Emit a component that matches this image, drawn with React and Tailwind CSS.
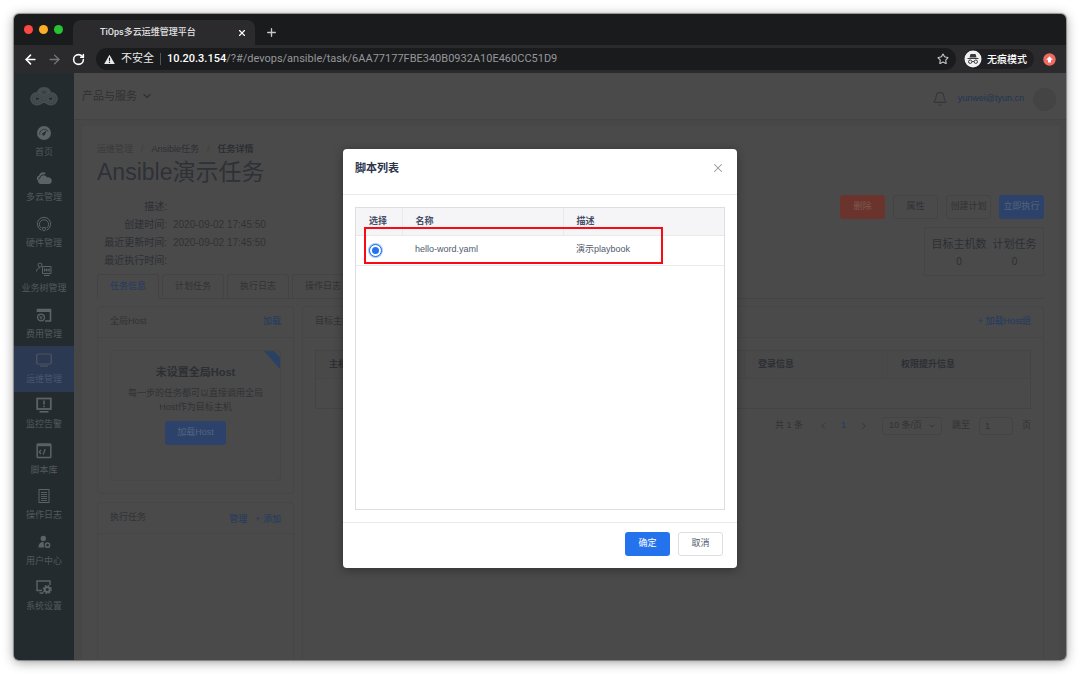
import { useState } from 'react';
import { ArrowLeft, ArrowRight, RotateCw, Star, X, Plus, ChevronDown, ChevronLeft, ChevronRight, Bell } from 'lucide-react';

const menu = [
    { label: '首页', icon: 'home' },
    { label: '多云管理', icon: 'cloud' },
    { label: '硬件管理', icon: 'hardware' },
    { label: '业务树管理', icon: 'tree' },
    { label: '费用管理', icon: 'cost' },
    { label: '运维管理', icon: 'monitor', active: true },
    { label: '监控告警', icon: 'alarm' },
    { label: '脚本库', icon: 'script' },
    { label: '操作日志', icon: 'log' },
    { label: '用户中心', icon: 'user' },
    { label: '系统设置', icon: 'setting' },
];

const info = [
    { label: '描述', value: '' },
    { label: '创建时间', value: '2020-09-02 17:45:50' },
    { label: '最近更新时间', value: '2020-09-02 17:45:50' },
    { label: '最近执行时间', value: '' },
];

const tabs = ['任务信息', '计划任务', '执行日志', '操作日志'];

const shapes = {
    home: (
        <>
            <circle cx="8" cy="8" r="7" fill="currentColor" />
            <path d="M3.8 9.5a4.5 4.5 0 0 1 8.2-3.2" fill="none" stroke="#232b2e" strokeWidth="1" strokeDasharray="2 .6" />
            <path d="M10.8 5.3 9 9.2a1.4 1.4 0 1 1-1.6-1.5z" fill="#232b2e" />
        </>
    ),
    cloud: (
        <>
            <path d="M1.300 10.500C.3 8.500 1 6.200 3 5.800 3.600 2.800 7 1.300 9.800 3.200L8.800 4.200C6 4 4.500 5.300 3.800 7.200 2.500 7.800 2 9 2.200 10z" fill="currentColor" />
            <path d="M4.500 14a2.900 2.900 0 0 1-.3-5.700C4.700 4.800 9.300 3.900 11 7.400c2.700-.3 4.800 1.200 4.800 3.500 0 1.800-1.300 3.100-3.300 3.100z" fill="currentColor" />
        </>
    ),
    hardware: (
        <g fill="none" stroke="currentColor">
            <path d="M5.500 14.200a6.700 6.700 0 1 1 5 0" />
            <path d="M5.200 12a4.600 4.600 0 1 1 5.600 0" />
            <path d="M6.700 11.500h2.600v2a1.300 1.300 0 0 1-2.600 0z" />
        </g>
    ),
    tree: (
        <g fill="none" stroke="currentColor">
            <circle cx="4" cy="4" r="2" />
            <path d="M.5 10.500C.8 8 2 6.800 4 6.800M6.500 5.500H15v7H6.500zM8.500 7.500v3M10.700 7.500v3M13 7.500v3M8 9h6M8 14.500h5.500" />
        </g>
    ),
    cost: (
        <>
            <path d="M1.500 5V2.500h13V14H9" fill="none" stroke="currentColor" strokeWidth="1.600" />
            <path d="M1 2h14v3H1z" fill="currentColor" />
            <circle cx="5" cy="10.500" r="3.400" fill="none" stroke="currentColor" strokeWidth="1.300" />
            <path d="m3.500 8.800 1.500 1.700 1.500-1.700M5 10.500v2M3.800 11h2.400" fill="none" stroke="currentColor" strokeWidth=".9" />
        </>
    ),
    monitor: (
        <>
            <rect x=".8" y="2" width="14.400" height="10" rx="1.200" fill="none" stroke="currentColor" strokeWidth="1.200" />
            <path d="M4 14h8" stroke="currentColor" strokeWidth="1.200" />
        </>
    ),
    alarm: (
        <>
            <rect x="1.200" y="1.500" width="13.600" height="10.500" fill="none" stroke="currentColor" strokeWidth="1.800" />
            <path d="M3.500 14.800h9" stroke="currentColor" strokeWidth="1.600" />
            <path d="M8 3.500v4M8 8.800v1.500" stroke="currentColor" strokeWidth="1.600" />
        </>
    ),
    script: (
        <>
            <rect x="1.200" y="1" width="13.600" height="13.500" rx=".8" fill="none" stroke="currentColor" strokeWidth="1.500" />
            <path d="M1 2.200h14" stroke="currentColor" strokeWidth="2" />
            <path d="M5 7 3.200 9 5 11M9.200 6l-2 5.500" fill="none" stroke="currentColor" strokeWidth="1.200" />
        </>
    ),
    log: (
        <g fill="none" stroke="currentColor">
            <rect x="3" y="1.500" width="10" height="13" />
            <path d="M5 4.500h6M5 6.500h6M5 8.500h6M5 10.500h6M5 12.500h6" strokeWidth=".9" />
        </g>
    ),
    user: (
        <>
            <circle cx="7.300" cy="4.500" r="2.700" fill="currentColor" />
            <path d="M2.500 13.500c0-4 2-5.500 5-5.500L8 13.500z" fill="currentColor" />
            <circle cx="11.500" cy="11.200" r="2.100" fill="none" stroke="currentColor" strokeWidth="1.500" />
        </>
    ),
    setting: (
        <>
            <path d="M6 11.500H1V2h13v4M3.500 14h4" fill="none" stroke="currentColor" strokeWidth="1.400" />
            <circle cx="11.300" cy="10.500" r="2.500" fill="none" stroke="currentColor" strokeWidth="2" />
            <circle cx="11.300" cy="10.500" r="3.900" fill="none" stroke="currentColor" strokeWidth="1.500" strokeDasharray="1.600 1.460" />
        </>
    ),
};

const loop = 'M14 12.500C12 10.500 9.500 8.700 7 8.700a4 4 0 0 0 0 8c5 0 9-8 14-8a4 4 0 0 1 0 8c-2.500 0-5-2.200-7-4.200z';

const Logo = () => (
    <svg viewBox="0 0 28 20" className="h-5 w-7" fill="none">
        <path d="M9 5.500a6 6 0 0 1 10 0l-2 3-3 2-3-2z" fill="#394144" stroke="#464e51" strokeWidth="3.600" strokeLinejoin="round" />
        <path d={loop} stroke="#464e51" strokeWidth="5.600" />
        <path d={loop} stroke="#3a4245" strokeWidth="2.400" />
        <path d={loop} stroke="#464e51" strokeWidth="1.200" />
    </svg>
);

const BrowserBar = () => (
    <div className="font-[Roboto,'Noto_Sans_CJK_SC',sans-serif] text-white">
        <div className="flex h-[31px] items-end bg-[#1a1b1d] pl-[10px]">
            <div className="flex h-[31px] items-center gap-[6px]">
                <span className="h-[9px] w-[9px] rounded-full bg-[#fc4745]" />
                <span className="h-[9px] w-[9px] rounded-full bg-[#fdae25]" />
                <span className="h-[9px] w-[9px] rounded-full bg-[#29c331]" />
            </div>
            <div className="ml-[10px] flex h-[25px] w-[182px] items-center justify-between rounded-t-lg bg-[#2b2b2e] pr-2 pl-[27px]">
                <span className="text-[9px] font-medium text-[#e3e3e5]">TiOps多云运维管理平台</span>
                <button aria-label="关闭标签页"><X className="h-[10px] w-[10px]" strokeWidth={2.8} /></button>
            </div>
            <button aria-label="新标签页" className="flex h-[25px] items-center pl-[10px] text-[#c8c8ca]"><Plus className="h-[13px] w-[13px]" strokeWidth={2.5} /></button>
        </div>
        <div className="flex h-7 items-center bg-[#2b2b2e] pr-[10px] pl-[9px]">
            <button aria-label="后退"><ArrowLeft className="h-[15px] w-[15px]" strokeWidth={2.5} /></button>
            <button aria-label="前进" className="ml-[9px] text-[#77777a]"><ArrowRight className="h-[15px] w-[15px]" strokeWidth={2.2} /></button>
            <button aria-label="刷新" className="ml-[10px]"><RotateCw className="h-[13px] w-[13px]" strokeWidth={2.8} /></button>
            <div className="ml-[11px] flex h-[22px] min-w-0 flex-1 items-center rounded-full bg-[#1a1b1d] pr-[7px] pl-[8px] text-[11px]">
                <svg viewBox="0 0 12 12" className="h-[11px] w-[11px]">
                    <path d="M6 .8 11.800 11H.2z" fill="#e8e8ea" />
                    <path d="M6 4.200v3.300M6 8.500v1.300" stroke="#1a1b1d" strokeWidth="1.200" />
                </svg>
                <span className="ml-[6px] text-[#e8e8ea]">不安全</span>
                <span className="mx-[6px] h-3 w-px bg-[#55565a]" />
                <span className="font-medium text-white">10.20.3.154</span>
                <span className="flex-1 truncate text-[#96979b]">/?#/devops/ansible/task/6AA77177FBE340B0932A10E460CC51D9</span>
                <button aria-label="收藏"><Star className="h-3 w-3 text-[#c8c8ca]" strokeWidth={2.2} /></button>
            </div>
            <div className="ml-2 flex h-5 items-center rounded-full bg-[#1f1f21] pr-[7px]">
                <svg viewBox="0 0 18 18" className="h-[18px] w-[18px]">
                    <circle cx="9" cy="9" r="8.500" fill="#f1f1f2" />
                    <path d="M6.500 4h5l1 3.500h-7zM3.500 8h11v1h-11z" fill="#3a3a3c" />
                    <path d="M8 11.500h2" stroke="#3a3a3c" />
                    <circle cx="6.200" cy="11.700" r="1.700" fill="none" stroke="#3a3a3c" />
                    <circle cx="11.800" cy="11.700" r="1.700" fill="none" stroke="#3a3a3c" />
                </svg>
                <span className="ml-[5px] text-[10px] font-medium">无痕模式</span>
            </div>
            <button aria-label="更新" className="ml-[9px]">
                <svg viewBox="0 0 13 13" className="h-[13px] w-[13px]">
                    <circle cx="6.500" cy="6.500" r="6.200" fill="#ee6a63" />
                    <path d="M6.500 3.200 9.800 6.700H8v2.800H5V6.700H3.200z" fill="#fff" />
                </svg>
            </button>
        </div>
    </div>
);

const Sidebar = () => (
    <nav className="w-[60px] shrink-0 bg-[#232b2e] text-[9px] text-[#525a5d]">
        <div className="flex h-[46px] items-center justify-center"><Logo /></div>
        <div className="flex h-[500px] flex-col">
            {menu.map((m) => (
                <a key={m.icon} href="#" className={m.active ? 'flex flex-1 flex-col items-center justify-center gap-1 bg-[#2b3953] text-[#4a576e]' : 'flex flex-1 flex-col items-center justify-center gap-1'}>
                    <svg viewBox="0 0 16 16" className={m.active ? 'h-4 w-4 text-[#505461]' : 'h-4 w-4 text-[#5c6366]'}>{shapes[m.icon]}</svg>
                    <span className="leading-[14px] whitespace-nowrap">{m.label}</span>
                </a>
            ))}
        </div>
    </nav>
);

const HostPanel = () => (
    <section className="rounded-sm border border-[#464646]">
        <div className="flex h-[31px] items-center justify-between border-b border-[#464646] px-3">
            <h2>全局Host</h2>
            <a href="#" className="text-[#213a62]">加载</a>
        </div>
        <div className="p-3">
            <div className="relative flex h-[131px] flex-col items-center rounded-sm border border-[#464646] px-2 pt-[13px] text-center">
                <svg viewBox="0 0 16 18" className="absolute top-0 right-0 h-[18px] w-4"><path d="M0 0h10l6 6v12z" fill="#2a4262" /></svg>
                <h3 className="text-[11px] leading-4 font-bold text-[#2c2f34]">未设置全局Host</h3>
                <p className="mt-[6px] w-[140px] leading-[14px]">每一步的任务都可以直接调用全局Host作为目标主机</p>
                <button className="mt-[7px] h-6 rounded-[3px] bg-[#2d426a] px-3 text-[#54627c]">加载Host</button>
            </div>
        </div>
    </section>
);

const TargetPanel = () => (
    <section className="min-w-0 flex-1 rounded-t-sm border border-b-0 border-[#464646]">
        <div className="flex h-[31px] items-center justify-between border-b border-[#464646] px-3">
            <h2>目标主机</h2>
            <a href="#" className="text-[#213a62]">+ 加载Host组</a>
        </div>
        <div className="px-3 pt-3">
            <table className="w-full table-fixed border border-[#444] text-left">
                <thead>
                    <tr className="h-7 border-b border-[#464646] bg-[#494949] text-[#2c2f34]">
                        <th className="px-[13px] font-bold">主机</th>
                        <th></th>
                        <th></th>
                        <th className="border-l border-[#464646] px-[13px] font-bold">登录信息</th>
                        <th className="border-l border-[#464646] px-[13px] font-bold">权限提升信息</th>
                    </tr>
                </thead>
                <tbody>
                    <tr className="h-[30px]"><td colSpan={5}></td></tr>
                </tbody>
            </table>
            <div className="mt-2 flex h-[18px] items-center justify-end">
                <span>共 1 条</span>
                <button aria-label="上一页" className="ml-[15px]"><ChevronLeft className="h-[10px] w-[10px]" /></button>
                <button className="mx-[13px] text-[#213a62]">1</button>
                <button aria-label="下一页"><ChevronRight className="h-[10px] w-[10px]" /></button>
                <span className="relative ml-[13px] flex items-center">
                    <select aria-label="每页条数" className="h-[18px] w-[60px] appearance-none rounded-[3px] border border-[#444] pl-[6px]">
                        <option>10 条/页</option>
                    </select>
                    <ChevronDown className="pointer-events-none absolute right-[6px] h-2 w-2" strokeWidth={2.5} />
                </span>
                <label htmlFor="page" className="ml-[10px]">跳至</label>
                <input id="page" defaultValue="1" className="mx-[9px] h-[18px] w-[34px] rounded-[3px] border border-[#444] px-[5px]" />
                <span>页</span>
            </div>
        </div>
    </section>
);

const ScriptModal = () => {
    const [selected, setSelected] = useState('hello-word.yaml');

    return (
        <div role="dialog" aria-labelledby="modal-title" className="w-[394px] rounded bg-white text-[9px] text-[#515a6e] shadow-[0_2px_10px_rgba(0,0,0,0.35)]">
            <div className="flex h-[46px] items-start justify-between border-b border-[#e8eaec] px-3 pt-[11px]">
                <h2 id="modal-title" className="text-[11px] leading-4 font-bold text-[#2b344b]">脚本列表</h2>
                <button aria-label="关闭" className="text-[#999]"><X className="h-4 w-[14px]" strokeWidth={1.8} /></button>
            </div>
            <div className="p-3">
                <div className="relative h-[303px] border border-[#dcdee2]">
                    <table className="w-full table-fixed text-left">
                        <thead>
                            <tr className="h-[27px] border-b border-[#e8eaec] bg-[#f5f5f8] text-[#464f66]">
                                <th className="w-[46px] border-r border-[#e8eaec] pl-[13px] font-bold">选择</th>
                                <th className="border-r border-[#e8eaec] px-[13px] font-bold">名称</th>
                                <th className="px-[13px] font-bold">描述</th>
                            </tr>
                        </thead>
                        <tbody>
                            <tr className="h-[30px] border-b border-[#e8eaec]">
                                <td className="pl-[14px]">
                                    <input
                                        type="radio"
                                        id="script"
                                        name="script"
                                        checked={selected === 'hello-word.yaml'}
                                        onChange={() => setSelected('hello-word.yaml')}
                                        className="block h-[11px] w-[11px] appearance-none rounded-full border-2 border-white bg-[#2573ec] shadow-[0_0_0_2px_#a9c9f8] outline outline-[#2573ec]"
                                    />
                                </td>
                                <td className="px-[13px]"><label htmlFor="script">hello-word.yaml</label></td>
                                <td className="px-[13px]">演示playbook</td>
                            </tr>
                        </tbody>
                    </table>
                    <div className="pointer-events-none absolute top-[19px] left-2 h-[37px] w-[299px] border-2 border-[#fa0a14]" />
                </div>
            </div>
            <div className="flex h-[46px] items-start justify-end gap-2 border-t border-[#e8eaec] px-[14px] pt-[9px]">
                <button className="h-6 w-[45px] rounded-[3px] bg-[#2573ec] text-white">确定</button>
                <button className="h-6 w-[45px] rounded-[3px] border border-[#dcdee2]">取消</button>
            </div>
        </div>
    );
};

export default function App() {
    return (
        <div className="flex h-screen bg-white p-[14px] font-['Liberation_Sans','Noto_Sans_CJK_SC',sans-serif]">
            <div className="relative flex min-w-0 flex-1 flex-col overflow-hidden rounded-[5px] shadow-[0_0_1px_1px_rgba(0,0,0,0.35),0_2px_12px_rgba(0,0,0,0.4)]">
                <BrowserBar />
                <div className="flex min-h-0 flex-1 bg-[#474747] text-[9px] text-[#303235]">
                    <Sidebar />
                    <div className="flex min-w-0 flex-1 flex-col">
                        <header className="flex h-[47px] shrink-0 items-center justify-between border-b border-[#434343] bg-[#4a4a4a] pr-[10px] pl-2">
                            <button className="flex items-center gap-[4px] text-[11px] text-[#2f3133]">产品与服务 <ChevronDown className="h-3 w-3" strokeWidth={2.5} /></button>
                            <div className="flex items-center pt-[6px]">
                                <Bell className="h-4 w-4 text-[#333]" strokeWidth={1.5} />
                                <a href="#" className="ml-[10px] text-[9px] text-[#213554]">yunwei@tyun.cn</a>
                                <span className="ml-[9px] h-[23px] w-[23px] rounded-full bg-[#444]" />
                            </div>
                        </header>
                        <main className="mt-[6px] mr-[7px] ml-2 flex min-h-0 flex-1 flex-col bg-[#4a4a4a] px-[15px] pt-[15px]">
                            <div className="flex shrink-0 leading-4">
                                <a href="#" className="text-[#3a3a3a]">运维管理</a>
                                <span className="mx-2 text-[#3e3e3e]">/</span>
                                <a href="#" className="text-[#2c2f34]">Ansible任务</a>
                                <span className="mx-2 text-[#3e3e3e]">/</span>
                                <span className="font-bold text-[#2c2f34]">任务详情</span>
                            </div>
                            <h1 className="text-[23px] leading-[31px] text-[#2e3137]">Ansible演示任务</h1>
                            <div className="flex shrink-0 items-start justify-between pt-[7px]">
                                <dl className="pt-[3px] text-[10px] leading-[18px]">
                                    {info.map((row) => (
                                        <div key={row.label} className="flex">
                                            <dt className="w-[70px] text-right whitespace-nowrap text-[#2c2f34]">{row.label}:</dt>
                                            <dd className="ml-[6px]">{row.value}</dd>
                                        </div>
                                    ))}
                                </dl>
                                <div className="flex flex-col items-end gap-2">
                                    <div className="flex gap-2">
                                        <button className="h-6 w-[45px] rounded-[3px] bg-[#6a342d] text-[#80574f]">删除</button>
                                        <button className="h-6 w-[45px] rounded-[3px] border border-[#444]">属性</button>
                                        <button className="h-6 w-[45px] rounded-[3px] border border-[#444]">创建计划</button>
                                        <button className="h-6 w-[45px] rounded-[3px] bg-[#2d426a] text-[#54627c]">立即执行</button>
                                    </div>
                                    <div className="flex h-[49px] w-[120px] justify-center gap-[6px] border border-[#454545] pt-2 text-center text-[11px] leading-4 text-[#2c2f34]">
                                        <div>目标主机数<p className="mt-[2px] text-[10px]">0</p></div>
                                        <div>计划任务<p className="mt-[2px] text-[10px]">0</p></div>
                                    </div>
                                </div>
                            </div>
                            <div className="-mt-[2px] flex h-[25px] shrink-0 gap-[3px] border-b border-[#434343]">
                                {tabs.map((t, i) => (
                                    <button key={t} className={i === 0 ? '-mb-px w-[62px] rounded-t-[3px] border border-b-0 border-[#434343] bg-[#4a4a4a] text-[#213a62]' : 'w-[62px] rounded-t-[3px] border border-b-0 border-[#444]'}>{t}</button>
                                ))}
                            </div>
                            <div className="mt-[7px] flex min-h-0 flex-1 gap-2">
                                <div className="flex w-[197px] shrink-0 flex-col gap-2">
                                    <HostPanel />
                                    <section className="flex-1 rounded-t-sm border border-b-0 border-[#464646]">
                                        <div className="flex h-[31px] items-center justify-between border-b border-[#464646] px-3">
                                            <h2>执行任务</h2>
                                            <div className="flex gap-2 pt-[3px] text-[#213a62]">
                                                <a href="#">管理</a>
                                                <a href="#">+ 添加</a>
                                            </div>
                                        </div>
                                    </section>
                                </div>
                                <TargetPanel />
                            </div>
                        </main>
                    </div>
                </div>
                <div className="absolute inset-0 flex items-start justify-center pt-[135px]">
                    <ScriptModal />
                </div>
            </div>
        </div>
    );
}
